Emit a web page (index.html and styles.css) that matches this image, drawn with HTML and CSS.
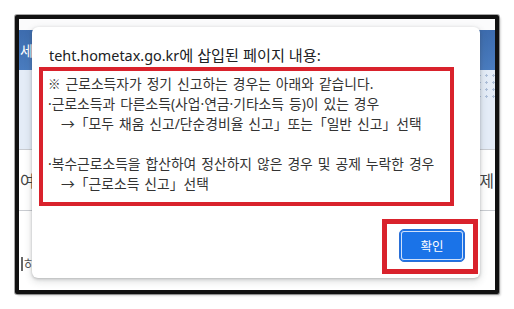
FILE: index.html
```html
<!DOCTYPE html>
<html lang="ko">
<head>
<meta charset="utf-8">
<title>페이지 내용</title>
<link rel="stylesheet" href="styles.css">
</head>
<body>
<div class="frame">
  <div class="page">
    <div class="strip"></div>
    <div class="band"><span class="band-text">세</span></div>
    <div class="light">
      <div class="light-fill"></div>
      <div class="dots"></div>
    </div>
    <div class="row">
      <span class="row-left">여</span>
      <span class="row-right">제</span>
    </div>
    <div class="rest">
      <span class="rest-text">하</span>
    </div>
  </div>

  <div class="dialog">
    <div class="dialog-title"><span class="host">teht.hometax.go.kr</span>에 삽입된 페이지 내용:</div>
    <div class="highlight msg">
      <p><span class="mark">※</span> 근로소득자가 정기 신고하는 경우는 아래와 같습니다.</p>
      <p>·근로소득과 다른소득(사업·연금·기타소득 등)이 있는 경우</p>
      <p class="indent">→「모두 채움 신고/단순경비율 신고」또는「일반 신고」선택</p>
      <p class="blank">&nbsp;</p>
      <p>·복수근로소득을 합산하여 정산하지 않은 경우 및 공제 누락한 경우</p>
      <p class="indent">→「근로소득 신고」선택</p>
    </div>
    <div class="dialog-footer">
      <div class="highlight btn-wrap">
        <button class="ok-btn" type="button">확인</button>
      </div>
    </div>
  </div>
</div>
</body>
</html>
```

FILE: styles.css
```css
* { box-sizing: border-box; }

html, body {
  margin: 0;
  padding: 0;
  background: #ffffff;
}

body {
  width: 514px;
  height: 309px;
  overflow: hidden;
  font-family: "Noto Sans", "Noto Sans CJK KR", sans-serif;
}

.frame {
  position: relative;
  margin: 15px 0 0 15px;
  width: 484px;
  height: 279px;
  border: 4px solid #111;
  border-radius: 2px;
  box-shadow: 0 0 0 1px rgba(0,0,0,0.35), 2px 2px 2px rgba(0,0,0,0.15);
  overflow: hidden;
  background: #fff;
}

.page {
  display: flex;
  flex-direction: column;
  height: 100%;
}

.strip {
  height: 11px;
  background: #fbfbfc;
}

.band {
  height: 40px;
  background: linear-gradient(#3d6cae, #4a7cbf);
  display: flex;
  align-items: center;
  padding-left: 1px;
}

.band-text {
  color: #fff;
  font-size: 14px;
  font-family: "Noto Sans CJK KR", sans-serif;
}

.light {
  height: 80px;
  background: #e4ecf7;
  border-bottom: 1px solid #c9ccd1;
  display: flex;
  align-items: flex-start;
}

.light-fill { flex: 1; }

.dots {
  width: 40px;
  height: 26px;
  margin-top: 2px;
  background-color: #e4ecf7;
  background-image: radial-gradient(circle, #aebfd8 1px, transparent 1.4px);
  background-size: 7px 7px;
}

.row {
  height: 61px;
  border-bottom: 1px solid #c9ccd1;
  display: flex;
  align-items: center;
  justify-content: space-between;
  padding: 0 1px 0 1px;
  font-family: "Noto Sans CJK KR", sans-serif;
  font-size: 16px;
  color: #444;
}

.rest {
  flex: 1;
  padding: 41px 0 0 2px;
}

.rest-text {
  display: inline-block;
  border-left: 2px solid #666;
  padding-left: 1px;
  font-family: "Noto Sans CJK KR", sans-serif;
  font-size: 13px;
  line-height: 14px;
  color: #555;
}

.dialog {
  position: absolute;
  left: 13px;
  top: 8px;
  width: 448px;
  background: #fff;
  border-radius: 6px;
  box-shadow: 0 1px 3px rgba(60,64,67,0.3), 0 3px 7px 1px rgba(60,64,67,0.15);
  padding: 0 2px 4px 7px;
  display: flex;
  flex-direction: column;
}

.dialog-title {
  padding: 18px 0 1px 10px;
  font-size: 15.2px;
  line-height: 20px;
  color: #202124;
  font-family: "Noto Sans", "Noto Sans CJK KR", sans-serif;
}

.host {
  font-size: 14.4px;
}

.highlight {
  border: 4px solid #d9222c;
}

.msg {
  width: 415px;
  height: 139px;
  padding: 3px 0 0 5px;
  font-family: "Noto Sans", "Noto Sans CJK KR", sans-serif;
  font-size: 13.8px;
  line-height: 20px;
  word-spacing: 1.4px;
  color: #333;
  text-spacing-trim: space-all;
}

.msg p {
  margin: 0;
  white-space: nowrap;
}

.msg .mark {
  font-family: "Noto Sans CJK KR", sans-serif;
  font-size: 12.5px;
}

.msg .indent {
  padding-left: 13px;
}

.dialog-footer {
  display: flex;
  justify-content: flex-end;
  margin-top: 13px;
}

.btn-wrap {
  border-width: 5px;
  width: 96px;
  height: 55px;
  padding: 5px 8px 7px 12px;
  display: flex;
}

.ok-btn {
  width: 66px;
  height: 33px;
  background: #1a73e8;
  color: #fff;
  border: 1px solid #2a6fd6;
  border-radius: 5px;
  box-shadow: inset 0 0 0 1px #1a73e8, inset 0 0 0 2px #cfe0fa;
  font-family: "Noto Sans CJK KR", sans-serif;
  font-size: 12.5px;
  padding: 0;
}
```
